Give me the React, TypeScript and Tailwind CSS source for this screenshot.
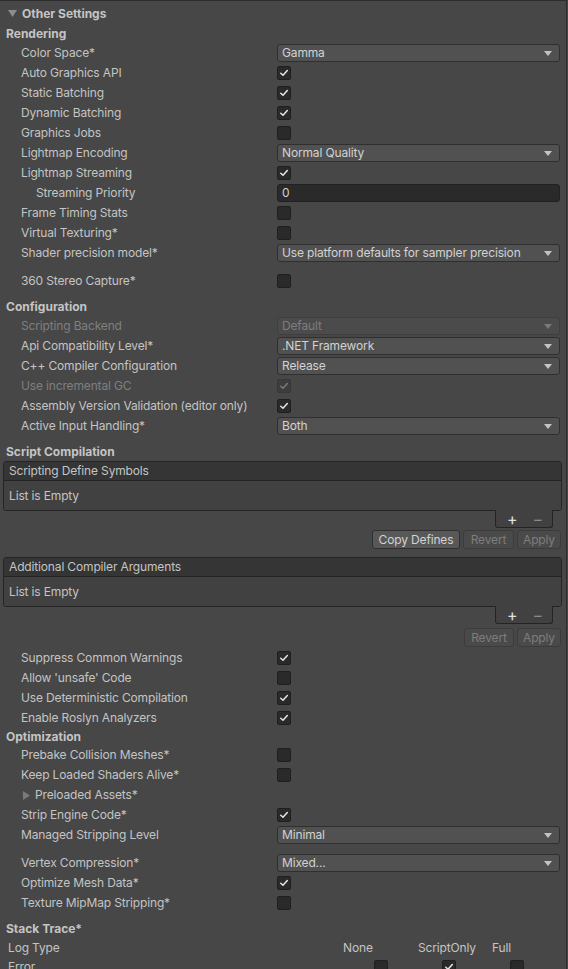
import React from 'react'

const label = 'text-[12px] tracking-[-0.15px] text-[#c4c4c4] whitespace-nowrap'

function Check({ checked = false, disabled = false }: { checked?: boolean; disabled?: boolean }) {
  return (
    <div
      className={`w-[14px] h-[14px] rounded-[2px] border flex items-center justify-center ${
        disabled ? 'bg-[#3d3d3d] border-[#383838]' : 'bg-[#2a2a2a] border-[#1f1f1f]'
      }`}
    >
      {checked && (
        <svg width="10" height="10" viewBox="0 0 10 10">
          <path
            d="M1.8 5.2 L4 7.3 L8.3 2.6"
            fill="none"
            stroke={disabled ? '#7a7a7a' : '#e6e6e6'}
            strokeWidth="1.5"
            strokeLinecap="round"
            strokeLinejoin="round"
          />
        </svg>
      )}
    </div>
  )
}

function Dropdown({ value, disabled = false }: { value: string; disabled?: boolean }) {
  return (
    <div
      className={`h-[18px] w-full rounded-[3px] border flex items-center justify-between pl-[4px] pr-[7px] ${
        disabled ? 'bg-[#4b4b4b] border-[#3e3e3e] text-[#7d7d7d]' : 'bg-[#515151] border-[#2f2f2f] text-[#d2d2d2]'
      }`}
    >
      <span className="text-[12px] tracking-[-0.15px] leading-none whitespace-nowrap">{value}</span>
      <svg width="8" height="5" viewBox="0 0 8 5">
        <polygon points="0,0 8,0 4,5" fill={disabled ? '#7a7a7a' : '#c4c4c4'} />
      </svg>
    </div>
  )
}

function Row({
  name,
  children,
  indent = 21,
  disabled = false,
}: {
  name: string
  children?: React.ReactNode
  indent?: number
  disabled?: boolean
}) {
  return (
    <div className="h-[20px] flex items-center">
      <div
        className={`w-[277px] shrink-0 text-[12px] tracking-[-0.15px] whitespace-nowrap ${
          disabled ? 'text-[#7f7f7f]' : 'text-[#c4c4c4]'
        }`}
        style={{ paddingLeft: indent }}
      >
        {name}
      </div>
      <div className="flex-1 pr-[6px] flex items-center">{children}</div>
    </div>
  )
}

function Header({ title, className = 'h-[18px]' }: { title: string; className?: string }) {
  return (
    <div className={`flex items-center pl-[6px] text-[12px] font-bold text-[#c4c4c4] ${className}`}>
      {title}
    </div>
  )
}

function ListBox({ title }: { title: string }) {
  return (
    <div className="px-[3px]">
      <div className="w-[559px] rounded-[3px] border border-[#242424] overflow-hidden">
        <div className="h-[19px] bg-[#353535] border-b border-[#242424] flex items-center pl-[5px] text-[12px] tracking-[-0.15px] text-[#c4c4c4]">
          {title}
        </div>
        <div className="h-[29px] bg-[#414141] flex items-center pl-[5px] text-[12px] tracking-[-0.15px] text-[#c4c4c4]">
          List is Empty
        </div>
      </div>
      <div className="flex justify-end pr-[10px]">
        <div className="w-[58px] h-[18px] -mt-[1px] bg-[#414141] border border-t-0 border-[#242424] rounded-b-[3px] flex items-center pl-[11px] gap-[15px]">
          <span className="text-[16px] leading-none text-[#e0e0e0]">+</span>
          <span className="text-[16px] leading-none text-[#8a8a8a]">−</span>
        </div>
      </div>
    </div>
  )
}

function Btn({ text, disabled = false, w }: { text: string; disabled?: boolean; w: string }) {
  return (
    <div
      className={`${w} h-[19px] rounded-[3px] border flex items-center justify-center text-[12px] tracking-[-0.15px] ${
        disabled ? 'bg-[#4a4a4a] border-[#3c3c3c] text-[#7d7d7d]' : 'bg-[#585858] border-[#303030] text-[#d2d2d2]'
      }`}
    >
      {text}
    </div>
  )
}

export default function App() {
  return (
    <div className="min-h-[969px] w-[568px] bg-[#474747] font-['Inter','Liberation_Sans',sans-serif] overflow-hidden">
      <div className="w-[567px] min-h-[969px] border-r border-t border-[#2c2c2c] pt-[3px]">
        {/* Foldout header */}
        <div className="h-[20px] flex items-center pl-[8px] gap-[5px]">
          <svg width="9" height="8" viewBox="0 0 9 8">
            <polygon points="0,0 9,0 4.5,7" fill="#8c8c8c" />
          </svg>
          <span className="text-[12px] font-bold text-[#c4c4c4]">Other Settings</span>
        </div>

        <Header title="Rendering" className="h-[18px] mt-[1px]" />
        <Row name="Color Space*"><Dropdown value="Gamma" /></Row>
        <Row name="Auto Graphics API"><Check checked /></Row>
        <Row name="Static Batching"><Check checked /></Row>
        <Row name="Dynamic Batching"><Check checked /></Row>
        <Row name="Graphics Jobs"><Check /></Row>
        <Row name="Lightmap Encoding"><Dropdown value="Normal Quality" /></Row>
        <Row name="Lightmap Streaming"><Check checked /></Row>
        <Row name="Streaming Priority" indent={36}>
          <div className="h-[18px] w-full rounded-[3px] bg-[#2a2a2a] border border-[#212121] flex items-center pl-[4px] text-[12px] text-[#d2d2d2]">
            0
          </div>
        </Row>
        <Row name="Frame Timing Stats"><Check /></Row>
        <Row name="Virtual Texturing*"><Check /></Row>
        <Row name="Shader precision model*"><Dropdown value="Use platform defaults for sampler precision" /></Row>
        <div className="h-[8px]" />
        <Row name="360 Stereo Capture*"><Check /></Row>

        <Header title="Configuration" className="h-[18px] mt-[7px]" />
        <Row name="Scripting Backend" disabled><Dropdown value="Default" disabled /></Row>
        <Row name="Api Compatibility Level*"><Dropdown value=".NET Framework" /></Row>
        <Row name="C++ Compiler Configuration"><Dropdown value="Release" /></Row>
        <Row name="Use incremental GC" disabled><Check checked disabled /></Row>
        <Row name="Assembly Version Validation (editor only)"><Check checked /></Row>
        <Row name="Active Input Handling*"><Dropdown value="Both" /></Row>

        <Header title="Script Compilation" className="h-[18px] mt-[7px]" />
        <ListBox title="Scripting Define Symbols" />
        <div className="flex justify-end gap-[3px] pr-[5px] mt-[2px]">
          <Btn text="Copy Defines" w="w-[88px]" />
          <Btn text="Revert" disabled w="w-[51px]" />
          <Btn text="Apply" disabled w="w-[44px]" />
        </div>
        <div className="mt-[8px]">
          <ListBox title="Additional Compiler Arguments" />
        </div>
        <div className="flex justify-end gap-[3px] pr-[5px] mt-[4px]">
          <Btn text="Revert" disabled w="w-[50px]" />
          <Btn text="Apply" disabled w="w-[44px]" />
        </div>
        <div className="h-[1px]" />
        <Row name="Suppress Common Warnings"><Check checked /></Row>
        <Row name="Allow 'unsafe' Code"><Check /></Row>
        <Row name="Use Deterministic Compilation"><Check checked /></Row>
        <Row name="Enable Roslyn Analyzers"><Check checked /></Row>

        <Header title="Optimization" className="h-[17px]" />
        <Row name="Prebake Collision Meshes*"><Check /></Row>
        <Row name="Keep Loaded Shaders Alive*"><Check /></Row>
        <div className="h-[20px] flex items-center pl-[23px] gap-[5px]">
          <svg width="7" height="9" viewBox="0 0 7 9">
            <polygon points="0,0 7,4.5 0,9" fill="#7a7a7a" />
          </svg>
          <span className={label}>Preloaded Assets*</span>
        </div>
        <Row name="Strip Engine Code*"><Check checked /></Row>
        <Row name="Managed Stripping Level"><Dropdown value="Minimal" /></Row>
        <div className="h-[8px]" />
        <Row name="Vertex Compression*"><Dropdown value="Mixed..." /></Row>
        <Row name="Optimize Mesh Data*"><Check checked /></Row>
        <Row name="Texture MipMap Stripping*"><Check /></Row>

        <Header title="Stack Trace*" className="h-[18px] mt-[7px]" />
        <div className="h-[19px] flex items-center relative">
          <span className={`pl-[8px] ${label}`}>Log Type</span>
          <span className={`absolute left-[343px] ${label}`}>None</span>
          <span className={`absolute left-[418px] ${label}`}>ScriptOnly</span>
          <span className={`absolute left-[492px] ${label}`}>Full</span>
        </div>
        <div className="h-[19px] flex items-center relative">
          <span className={`pl-[8px] ${label}`}>Error</span>
          <div className="absolute left-[374px]"><Check /></div>
          <div className="absolute left-[442px]"><Check checked /></div>
          <div className="absolute left-[510px]"><Check /></div>
        </div>
      </div>
    </div>
  )
}
